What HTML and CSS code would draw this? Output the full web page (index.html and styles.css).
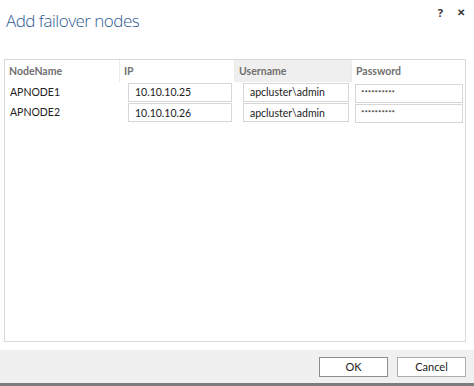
FILE: index.html
```html
<!DOCTYPE html>
<html lang="en">
<head>
    <meta charset="UTF-8">
    <title>Add failover nodes</title>
    <link rel="stylesheet" href="styles.css">
</head>
<body>
    <div class="dialog">
        <div class="head">
            <h1 class="title">Add failover nodes</h1>
            <div class="head-buttons">
                <span class="help">?</span>
                <span class="close">&#x2715;</span>
            </div>
        </div>

        <!-- Nodes grid -->
        <div class="grid">
            <div class="grid-row grid-header">
                <div class="cell">NodeName</div>
                <div class="cell">IP</div>
                <div class="cell cell-active">Username</div>
                <div class="cell">Password</div>
            </div>
            <div class="grid-row">
                <div class="cell label">APNODE1</div>
                <div class="cell edit"><input value="10.10.10.25"></div>
                <div class="cell edit"><input value="apcluster\admin"></div>
                <div class="cell edit pw"><input class="secret" value="**********"></div>
            </div>
            <div class="grid-row">
                <div class="cell label">APNODE2</div>
                <div class="cell edit"><input value="10.10.10.26"></div>
                <div class="cell edit"><input value="apcluster\admin"></div>
                <div class="cell edit pw"><input class="secret" value="**********"></div>
            </div>
        </div>

        <div class="footer">
            <button class="btn btn-default">OK</button>
            <button class="btn">Cancel</button>
        </div>
    </div>
</body>
</html>
```

FILE: styles.css
```css
body {
    margin: 0;
    background: #ffffff;
    font-family: 'Lato', 'Open Sans', sans-serif;
    color: #222;
}
.dialog {
    width: 474px;
    height: 386px;
    display: flex;
    flex-direction: column;
}
.head {
    height: 59px;
    display: flex;
    justify-content: space-between;
    align-items: flex-start;
    padding: 0 9px 0 6px;
    box-sizing: border-box;
}
.title {
    margin: 10px 0 0 0;
    font-family: 'Open Sans', sans-serif;
    font-size: 17px;
    font-weight: 300;
    line-height: 22px;
    letter-spacing: -0.5px;
    color: #2f5a94;
}
.head-buttons {
    display: flex;
    gap: 14px;
    margin-top: 5px;
    font-family: 'Open Sans', sans-serif;
    font-size: 11px;
    font-weight: bold;
    color: #333;
}
.close {
    font-size: 10px;
}

.grid {
    margin: 0 8px 0 4px;
    height: 283px;
    border: 1px solid #d8d8d8;
    box-sizing: border-box;
}
.grid-row {
    display: grid;
    grid-template-columns: 115px 115px 117px 1fr;
    height: 20px;
}
.grid-header {
    height: 22px;
}
.cell {
    font-size: 10.5px;
    line-height: 20px;
    padding-left: 5px;
    white-space: nowrap;
}
.grid-header .cell {
    line-height: 22px;
    font-weight: bold;
    color: #707070;
    border-right: 1px solid #ececec;
    padding-left: 4px;
}
.grid-header .cell:last-child {
    border-right: none;
}
.grid-header .cell-active {
    background: #efefef;
}
.label {
    color: #222;
}
.cell.edit {
    padding: 0 3px 0 8px;
}
.cell.pw {
    padding: 0 2px 0 3px;
}
.cell input {
    width: 100%;
    height: 19px;
    box-sizing: border-box;
    border: 1px solid #d6d6d6;
    padding: 0 6px;
    font-family: inherit;
    font-size: 10.5px;
    color: #222;
    outline: none;
}
.grid-row + .grid-row + .grid-row input {
    margin-top: 1px;
}
.cell input.secret {
    font-size: 8px;
    padding-left: 5px;
}

.footer {
    margin-top: auto;
    height: 33px;
    background: #f0f0f0;
    border-bottom: 3px solid #7d7d7d;
    display: flex;
    justify-content: flex-end;
    align-items: center;
    gap: 9px;
    padding-right: 8px;
}
.btn {
    width: 69px;
    height: 20px;
    background: #ffffff;
    border: 1px solid #adadad;
    font-family: inherit;
    font-size: 11px;
    color: #222;
    padding: 0;
}
.btn-default {
    border-color: #8c8c8c;
}
```
